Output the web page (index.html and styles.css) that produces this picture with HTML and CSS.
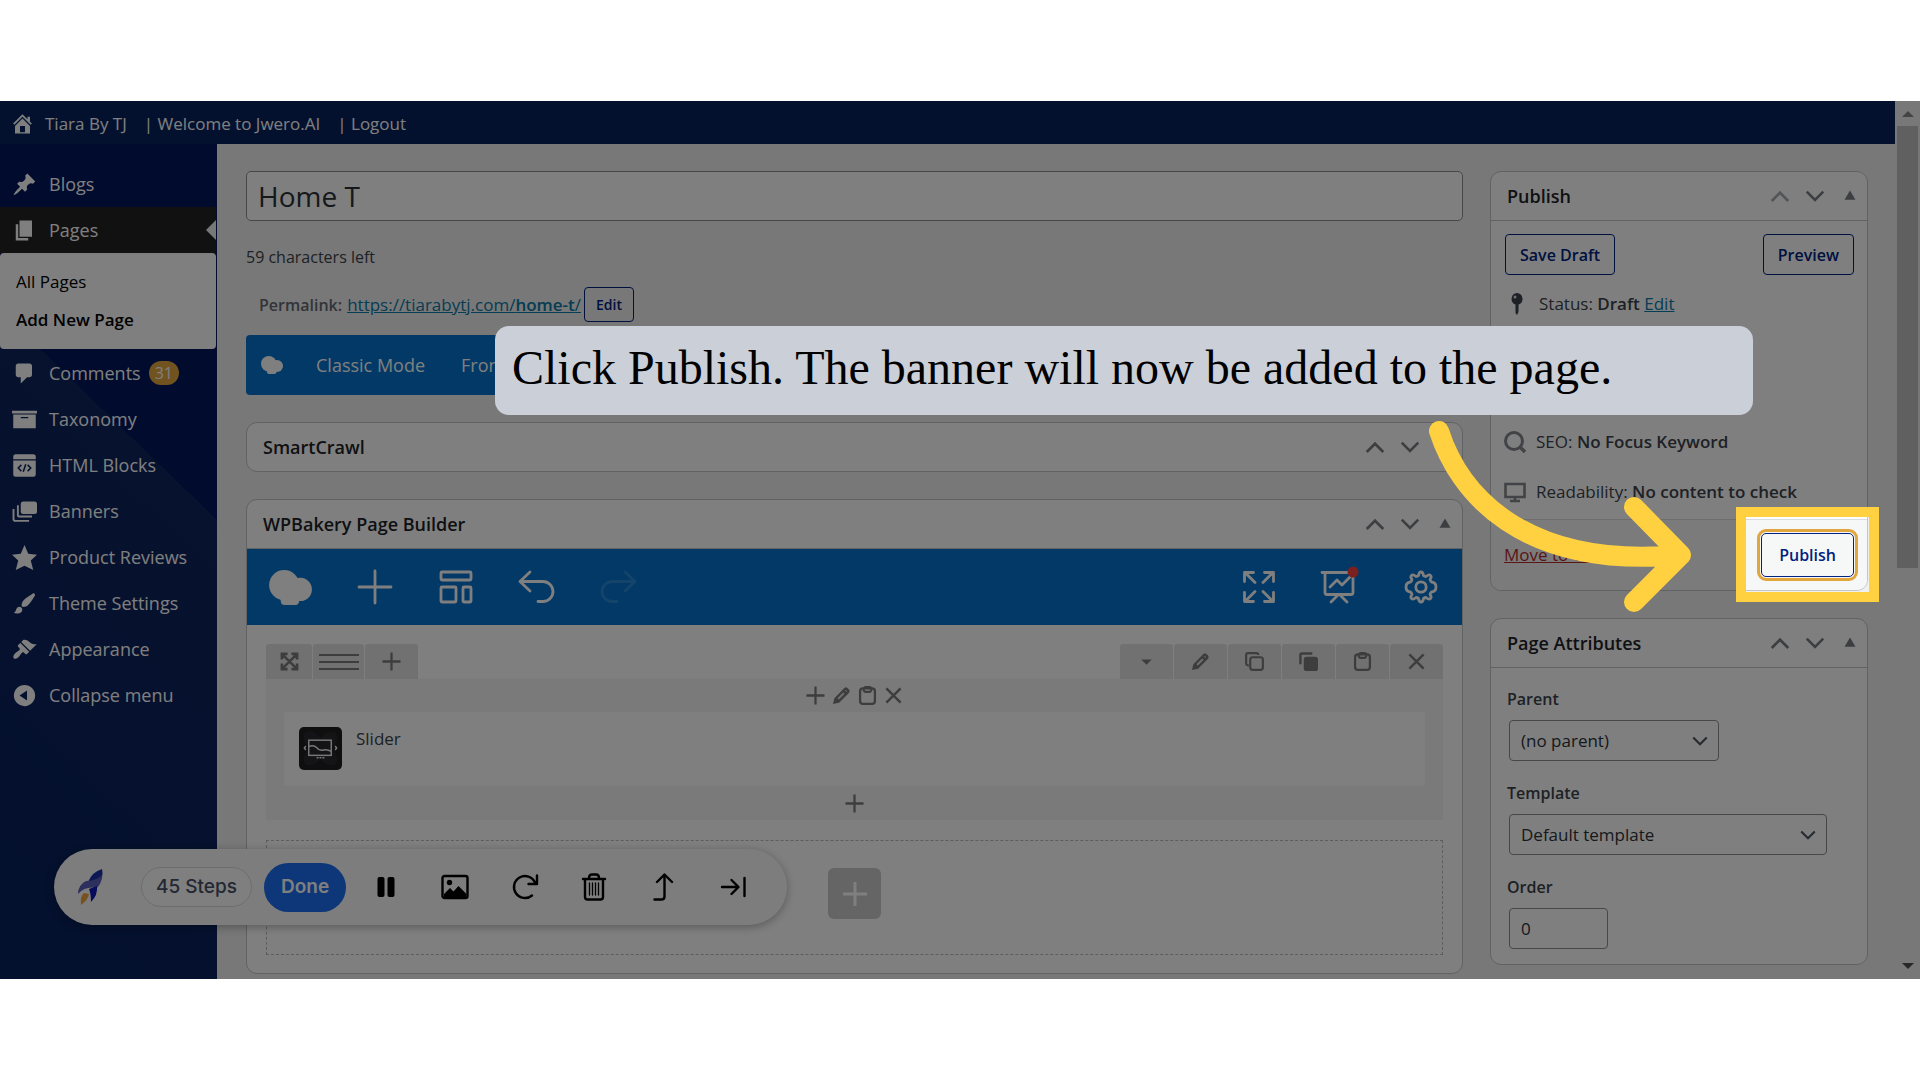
FILE: index.html
```html
<!DOCTYPE html>
<html lang="en">
<head>
<meta charset="utf-8">
<title>Add New Page - Tiara By TJ</title>
<link rel="stylesheet" href="styles.css">
</head>
<body>
<svg class="defs" width="0" height="0" aria-hidden="true">
  <symbol id="chev-up" viewBox="0 0 20 20"><path d="M2.500 14.500l7.500-7.500 7.500 7.500" fill="none" stroke="currentColor" stroke-width="2.4"/></symbol>
  <symbol id="chev-down" viewBox="0 0 20 20"><path d="M2.500 6l7.500 7.500L17.500 6" fill="none" stroke="currentColor" stroke-width="2.4"/></symbol>
  <symbol id="tri-up" viewBox="0 0 20 20"><path d="M10 5l5 8.500H5z" fill="currentColor"/></symbol>
  <symbol id="plus" viewBox="0 0 20 20"><path d="M10 .5v19M.5 10h19" fill="none" stroke="currentColor" stroke-width="2.4"/></symbol>
  <symbol id="close" viewBox="0 0 20 20"><path d="M2.500 2.500l15 15M17.500 2.500l-15 15" fill="none" stroke="currentColor" stroke-width="2.6"/></symbol>
  <symbol id="pencil" viewBox="0 0 20 20"><path d="M1 19l1.500-6L13 2q1.700-1.500 3.500.3l1.200 1.200q1.800 1.800.3 3.500L7.500 17.500z" fill="currentColor"/><path d="M6.500 13.500l6-6M14.500 5.500l.6-.6" stroke="#e3e3e3" stroke-width="2"/></symbol>
  <symbol id="clip" viewBox="0 0 20 20"><rect x="2.200" y="2.500" width="15.600" height="16.300" rx="3" fill="none" stroke="currentColor" stroke-width="2.400"/><rect x="6" y="1.200" width="8" height="5" rx="2.200" fill="none" stroke="currentColor" stroke-width="2.200"/></symbol>
  <symbol id="copy" viewBox="0 0 20 20"><path d="M4 14H3.200q-2 0-2-2V3.200q0-2 2-2H12q2 0 2 2" fill="none" stroke="currentColor" stroke-width="2.300"/><rect x="5.500" y="5.500" width="13.300" height="13.300" rx="2.500" fill="none" stroke="currentColor" stroke-width="2.300"/></symbol>
  <symbol id="dup" viewBox="0 0 20 20"><path d="M1.500 13V3q0-1.500 1.500-1.500h11" fill="none" stroke="currentColor" stroke-width="2.600"/><rect x="5" y="5" width="15" height="15" rx="3" fill="currentColor"/></symbol>
  <symbol id="cloud" viewBox="0 0 44 36"><circle cx="15.500" cy="15.500" r="15.500" fill="currentColor"/><circle cx="32" cy="20" r="12" fill="currentColor"/><path d="M11 26h24q-3 3-4 6-.5 4-4 4H16q-4 0-4-4z" fill="currentColor"/></symbol>
</svg>

<div class="screen">
  <div class="app">
    <header class="adminbar">
      <a href="#" class="site"><svg class="ico" viewBox="0 0 20 20"><path d="M16 8.500l1.530 1.530-1.060 1.060L10 4.600l-6.470 6.490-1.060-1.060L10 2.500l4 4v-2h2v4zm-6-2.460l6 5.990V18H4v-5.970zM12 17v-5H8v5h4z"/></svg>Tiara By TJ</a>
      <a href="#">| Welcome to Jwero.AI</a>
      <a href="#">| Logout</a>
    </header>

    <div class="body">
      <nav class="sidebar">
        <a href="#" class="item"><svg class="ico" viewBox="0 0 20 20"><path d="M10.440 3.020l1.820-1.820 6.360 6.350-1.830 1.820c-1.050-.68-2.480-.57-3.410.36l-.75.75c-.92.93-1.040 2.350-.35 3.410l-1.830 1.820-2.410-2.410-2.800 2.790c-.42.42-3.380 2.710-3.800 2.290s1.860-3.390 2.280-3.810l2.790-2.790L4.100 9.360l1.830-1.820c1.050.69 2.480.57 3.400-.36l.75-.75c.93-.92 1.050-2.350.36-3.410z"/></svg>Blogs</a>
        <a href="#" class="item current"><svg class="ico" viewBox="0 0 20 20"><path d="M6 15V2h10v13H6zm-1 1h8v2H3V5h2v11z"/></svg>Pages</a>
        <div class="submenu">
          <a href="#">All Pages</a>
          <a href="#" class="on">Add New Page</a>
        </div>
        <a href="#" class="item"><svg class="ico" viewBox="0 0 20 20"><path d="M5 2h9c1.100 0 2 .9 2 2v7c0 1.100-.9 2-2 2h-2l-5 5v-5H5c-1.100 0-2-.9-2-2V4c0-1.100.9-2 2-2z"/></svg>Comments<span class="count">31</span></a>
        <a href="#" class="item"><svg class="ico" viewBox="0 0 20 20"><path d="M20 3v2.200H0V3zM1 6h18v11H1V6zm12 3V8H7v1h6z"/></svg>Taxonomy</a>
        <a href="#" class="item"><svg class="ico" viewBox="0 0 20 20"><path fill-rule="evenodd" d="M3 1h14q2 0 2 2v2H1V3q0-2 2-2zM1 6h18v11q0 2-2 2H3q-2 0-2-2z"/><path d="M7.500 9.500L5 12l2.500 2.500M12.500 9.500L15 12l-2.500 2.500M11 9l-2 6" fill="none" stroke="#0b2156" stroke-width="1.200"/></svg>HTML Blocks</a>
        <a href="#" class="item"><svg class="ico" viewBox="0 0 20 20"><rect x="7" y="2" width="13" height="10" rx="2"/><path d="M4.700 5v8q0 1 1 1H16M1.200 8v8q0 1.500 1.500 1.500h11" fill="none" stroke="#fff" stroke-width="1.500"/></svg>Banners</a>
        <a href="#" class="item"><svg class="ico" viewBox="0 0 20 20"><path d="M10 0l3 7 7 .75-5 4.620L17 20l-7-3.500L3 20l2-7.630L0 7.750 7 7z"/></svg>Product Reviews</a>
        <a href="#" class="item"><svg class="ico" viewBox="0 0 20 20"><path d="M18.330 3.570s.27-.8-.31-1.360c-.53-.52-1.220-.24-1.220-.24-.61.3-5.760 3.470-7.670 5.570-.86.96-2.060 3.790-1.090 4.820.92.98 3.960-.17 4.790-1 2.060-2.060 5.210-7.170 5.500-7.790zM1.400 17.650c2.370-1.560 1.460-3.410 3.230-4.640.93-.65 2.220-.62 3.080.29.63.67.8 2.570-.16 3.460-1.570 1.450-4 1.550-6.150.89z"/></svg>Theme Settings</a>
        <a href="#" class="item"><svg class="ico" viewBox="0 0 20 20"><path d="M14.480 11.060L7.410 3.990l1.500-1.500c.5-.56 2.300-.47 3.510.32 1.210.8 1.430 1.280 2.910 2.100 1.180.64 2.450 1.260 4.450.85zm-.71.71L6.700 4.700 4.930 6.470c-.39.39-.39 1.020 0 1.410l1.060 1.060c.39.39.39 1.030 0 1.420-.6.6-1.430 1.110-2.210 1.690-.35.26-.7.53-1.010.84C1.430 14.230.4 16.080 1.400 17.070c.99 1 2.840-.03 4.180-1.360.31-.31.58-.66.85-1.020.57-.78 1.080-1.610 1.690-2.210.39-.39 1.020-.39 1.410 0l1.060 1.060c.39.39 1.020.39 1.410 0z"/></svg>Appearance</a>
        <a href="#" class="item"><svg class="ico" viewBox="0 0 20 20"><path fill-rule="evenodd" d="M10 1.500a8.500 8.500 0 1 1 0 17 8.500 8.500 0 0 1 0-17zM12 6v8l-6-4z"/></svg>Collapse menu</a>
      </nav>

      <main class="content">
        <div class="editor">
          <input class="title" type="text" value="Home T" aria-label="Title">
          <p class="chars">59 characters left</p>
          <div class="permalink"><strong>Permalink:</strong><a href="#">https://tiarabytj.com/<b>home-t</b>/</a><button class="btn small" type="button">Edit</button></div>
          <div class="modes"><svg class="modecloud"><use href="#cloud"/></svg><a href="#">Classic Mode</a><a href="#">Frontend Editor</a></div>

          <section class="panel crawl">
            <div class="head"><h2>SmartCrawl</h2><svg><use href="#chev-up"/></svg><svg><use href="#chev-down"/></svg><svg><use href="#tri-up"/></svg></div>
          </section>

          <section class="panel">
            <div class="head"><h2>WPBakery Page Builder</h2><svg><use href="#chev-up"/></svg><svg><use href="#chev-down"/></svg><svg><use href="#tri-up"/></svg></div>
            <div class="vcbar">
              <button type="button" class="brand" aria-label="WPBakery"><svg class="big"><use href="#cloud"/></svg></button>
              <button type="button" aria-label="Add element"><svg viewBox="0 0 32 32"><path d="M16 0v32M0 16h32"/></svg></button>
              <button type="button" aria-label="Templates"><svg viewBox="0 0 32 32"><rect x="1" y="1" width="30" height="8" rx="1"/><rect x="1" y="16" width="15" height="15" rx="1"/><rect x="23" y="16" width="8" height="15" rx="1"/></svg></button>
              <button type="button" aria-label="Undo"><svg class="wide" viewBox="0 0 36 32"><path d="M11 1L1 10.500 11 20M1 10.500h23a10 10 0 0 1 0 20h-5"/></svg></button>
              <button type="button" aria-label="Redo" class="off"><svg class="wide" viewBox="0 0 36 32"><path d="M25 1l10 9.500L25 20M35 10.500H12a10 10 0 0 0 0 20h5"/></svg></button>
              <span class="spacer"></span>
              <button type="button" aria-label="Full screen"><svg viewBox="0 0 32 32"><path d="M12 11.500L2 1.500M1.500 10.500v-9h9M20 11.500l10-10M21.500 1.500h9v9M12 20.500l-10 10M1.500 21.500v9h9M20 20.500l10 10M30.500 21.500v9h-9"/></svg></button>
              <button type="button" aria-label="SEO"><svg class="wide" viewBox="0 0 36 32"><path d="M0 1.500h32M3 1.500v20q0 2 2 2h24q2 0 2-2v-20M16 24l-7 7M18 24l7 7M8 16l7-7 5 5 8-8"/><circle cx="31" cy="1" r="5.500" fill="#f63e3e" stroke="none"/></svg></button>
              <button type="button" aria-label="Settings"><svg viewBox="0 0 32 32"><circle cx="16" cy="16" r="5.200"/><path d="M13.500 4.500q.500-3.500 2.500-3.500t2.500 3.500q1 1 2.500 1 3-2.500 4.500-1t-.5 4q.5 2 1.500 2.500 4.500.5 4.500 5t-4.500 5q-1 .5-1.500 2.500 2 2.500.5 4t-4.500-1q-1.500 0-2.500 1-.500 3.500-2.500 3.500t-2.500-3.500q-1-1-2.500-1-3 2.500-4.500 1t.5-4q-.500-2-1.500-2.500-4.500-.5-4.500-5t4.500-5q1-.500 1.500-2.500-2-2.500-.5-4t4.500 1q1.500 0 2.500-1z"/></svg></button>
            </div>
            <div class="canvas">
              <div class="tabs">
                <button type="button" class="t-move" aria-label="Move row"><svg viewBox="0 0 20 20"><path d="M3 3l14 14M17 3L3 17M2 8V2h6M12 2h6v6M18 12v6h-6M8 18H2v-6" fill="none" stroke="currentColor" stroke-width="2.800"/></svg></button>
                <button type="button" class="t-lay" aria-label="Row layout"><svg class="lines" viewBox="0 0 40 18"><path d="M0 2h40M0 9h40M0 16h40" fill="none" stroke="currentColor" stroke-width="2"/></svg></button>
                <button type="button" class="t-btn" aria-label="Add column"><svg><use href="#plus"/></svg></button>
                <span class="spacer"></span>
                <button type="button" class="t-btn" aria-label="Toggle row"><svg viewBox="0 0 20 20"><path d="M4.500 8h11l-5.500 5.500z" fill="currentColor"/></svg></button>
                <button type="button" class="t-btn" aria-label="Edit row"><svg><use href="#pencil"/></svg></button>
                <button type="button" class="t-btn" aria-label="Copy row"><svg><use href="#copy"/></svg></button>
                <button type="button" class="t-btn" aria-label="Clone row"><svg><use href="#dup"/></svg></button>
                <button type="button" class="t-btn" aria-label="Paste"><svg><use href="#clip"/></svg></button>
                <button type="button" class="t-btn" aria-label="Delete row"><svg><use href="#close"/></svg></button>
              </div>
              <div class="row">
                <div class="colctl"><svg><use href="#plus"/></svg><svg><use href="#pencil"/></svg><svg><use href="#clip"/></svg><svg><use href="#close"/></svg></div>
                <div class="element">
                  <svg class="thumb" viewBox="0 0 44 44"><rect width="44" height="44" rx="5" fill="#1e1e20"/><path d="M6 6q10-4 16 6 6-10 16-6 4 10-6 16 10 6 6 16-10 4-16-6-6 10-16 6-4-10 6-16Q2 16 6 6z" fill="#29292c"/><rect x="10" y="13.500" width="23" height="15.500" fill="none" stroke="#eee" stroke-width="1.500"/><path d="M10 20q5-2 8 1 3 4 7 2.500 4-1 8 1.500M7 19.500l-1.500 2L7 23.500M37 19.500l1.500 2-1.500 2M18 31.500h2M21 31.500h2M24 31.500h2" fill="none" stroke="#eee" stroke-width="1.500"/></svg>
                  <span>Slider</span>
                </div>
                <div class="colctl last"><svg><use href="#plus"/></svg></div>
              </div>
              <div class="newrow"><button type="button" class="addnew" aria-label="Add row"><svg viewBox="0 0 24 24"><path d="M12 0v24M0 12h24" stroke="#fff" stroke-width="3"/></svg></button></div>
            </div>
          </section>
        </div>

        <aside class="side">
          <section class="panel publish">
            <div class="head"><h2>Publish</h2><svg class="faint"><use href="#chev-up"/></svg><svg><use href="#chev-down"/></svg><svg><use href="#tri-up"/></svg></div>
            <div class="actions"><button class="btn" type="button">Save Draft</button><button class="btn" type="button">Preview</button></div>
            <div class="line"><svg class="pin" viewBox="0 0 12 22"><path d="M6 0a6 6 0 0 1 1.600 11.600L7.500 19 6 22 4.500 20V11.600A6 6 0 0 1 6 0z" fill="#3c434a"/><circle cx="4" cy="4" r="1.500" fill="#ddd"/></svg><span>Status: <b>Draft</b> <a href="#">Edit</a></span></div>
            <div class="line seo"><svg viewBox="0 0 22 22"><circle cx="10" cy="10" r="8.500" fill="none" stroke="#82878c" stroke-width="3"/><path d="M15.500 15.500l5.500 5.500" stroke="#82878c" stroke-width="3.500"/></svg><span>SEO: <b>No Focus Keyword</b></span></div>
            <div class="line"><svg viewBox="0 0 22 22"><path d="M1.500 3h19v13h-19zM6 20h10M11 16v4" fill="none" stroke="#82878c" stroke-width="2.600"/></svg><span>Readability: <b>No content to check</b></span></div>
            <div class="foot"><a href="#" class="trash">Move to Trash</a><button class="btn primary" type="button">Publish</button><div class="spotlight"></div></div>
          </section>

          <section class="panel attrs">
            <div class="head"><h2>Page Attributes</h2><svg><use href="#chev-up"/></svg><svg><use href="#chev-down"/></svg><svg><use href="#tri-up"/></svg></div>
            <form class="fields">
              <label for="parent">Parent</label>
              <div class="select short"><select id="parent"><option>(no parent)</option></select><svg><use href="#chev-down"/></svg></div>
              <label for="template">Template</label>
              <div class="select"><select id="template"><option>Default template</option></select><svg><use href="#chev-down"/></svg></div>
              <label for="order">Order</label>
              <input id="order" type="text" value="0">
            </form>
          </section>
        </aside>
      </main>
    </div>
  </div>

  <div class="scroll" aria-hidden="true"><i class="up"></i><div class="thumbbar"></div><i class="down"></i></div>

  <div class="recorder">
    <svg class="rocket" viewBox="0 0 26 36"><path d="M25 0q2 10-5 17l-9-4Q15 3 25 0z" fill="#1b2fa8"/><path d="M25 6q0 8-5 13Q8 17 1 25q0-9 8-13 10 0 16-6z" fill="#5a60b8"/><path d="M20 17q1 9-6 16 0-8-2-13z" fill="#0d18b4"/><path d="M12 25q-1 6-8 11-1-9 3-12z" fill="#f0a43c"/></svg>
    <span class="steps">45 Steps</span>
    <button class="done" type="button">Done</button>
    <button class="tool" type="button" aria-label="Pause"><svg viewBox="0 0 28 28"><rect x="5.500" y="4" width="7" height="20" rx="2" fill="#000" stroke="none"/><rect x="15.500" y="4" width="7" height="20" rx="2" fill="#000" stroke="none"/></svg></button>
    <button class="tool" type="button" aria-label="Screenshot"><svg viewBox="0 0 28 28"><rect x="1.500" y="3" width="25" height="22" rx="2"/><circle cx="8.500" cy="9.500" r="2.700" fill="#000" stroke="none"/><path d="M3 24v-3l6-6 3.500 3.500L17.500 13l8 8v3z" fill="#000" stroke="none"/></svg></button>
    <button class="tool" type="button" aria-label="Restart"><svg viewBox="0 0 28 28"><path d="M21 22.500A11 11 0 1 1 24 9.500M26 2.500V11h-8.500"/></svg></button>
    <button class="tool" type="button" aria-label="Delete"><svg viewBox="0 0 28 28"><path d="M3 6h22M5 6v18q0 2.500 2.500 2.500h13Q23 26.500 23 24V6M9 5q0-3.500 3-3.500h4q3 0 3 3.500"/><path d="M9.500 10v12M12.500 10v12M15.500 10v12M18.500 10v12" stroke-width="1.300"/></svg></button>
    <button class="tool" type="button" aria-label="Move up"><svg viewBox="0 0 28 28"><path d="M4.500 26.500h7q3 0 3-3V2M7 9l7.500-7.500L22 9"/></svg></button>
    <button class="tool" type="button" aria-label="Skip"><svg viewBox="0 0 28 28"><path d="M3 14h16M12.500 7l7 7-7 7M25.500 5v18"/></svg></button>
  </div>

  <div class="callout">Click Publish. The banner will now be added to the page.</div>
  <svg class="arrow" viewBox="0 0 270 200"><path d="M14 15C33 74 94 154 256 139M209 91l47 48-47 47" fill="none" stroke="#ffd040" stroke-width="20" stroke-linecap="round" stroke-linejoin="round"/></svg>
</div>
</body>
</html>
```
FILE: styles.css
```css
* { box-sizing: border-box; }

body {
  margin: 0;
  padding: 101px 0;
  background: #fff;
  color: #3c434a;
  font: 17px/24px "Open Sans", "Noto Sans", sans-serif;
}

.defs { position: absolute; }
button, input, select { font: inherit; color: inherit; margin: 0; }
button { cursor: pointer; }
h2, p { margin: 0; }
svg { flex: none; display: block; }
b, strong { font-weight: 600; }
a { color: #0a7aa8; }
.spacer { flex: 1; }

.screen {
  position: relative;
  display: flex;
  overflow: hidden;
  background: #f0f0f1;
}
.app { flex: 1; min-width: 0; display: flex; flex-direction: column; }

/* admin bar */
.adminbar {
  display: flex;
  align-items: center;
  gap: 17px;
  height: 43px;
  padding: 2px 0 0 10px;
  background: #06225e;
}
.adminbar a { display: flex; align-items: center; gap: 10px; color: #fff; text-decoration: none; }
.ico { width: 25px; height: 25px; fill: #fff; }

/* sidebar */
.body { flex: 1; display: flex; }
.sidebar {
  width: 217px;
  padding-top: 17px;
  background: linear-gradient(44deg, #06205c 0%, #0e245c 64%, #00165a 64%, #00165a 100%);
}
.item {
  position: relative;
  display: flex;
  align-items: center;
  gap: 12px;
  height: 46px;
  padding-left: 12px;
  color: #fff;
  font-size: 18px;
  text-decoration: none;
}
.item.current { background: #222; width: 216px; }
.item.current::after {
  content: "";
  position: absolute;
  right: 0;
  border: 10px solid transparent;
  border-left: 0;
  border-right-color: #f0f0f1;
}
.submenu {
  display: flex;
  flex-direction: column;
  width: 216px;
  margin-bottom: 1px;
  padding: 10px 0 10px 16px;
  border-radius: 4px;
  background: #fff;
}
.submenu a { line-height: 38px; color: #000; text-decoration: none; }
.submenu .on { font-weight: 600; }
.count {
  margin-left: -4px;
  padding: 0 6px;
  border-radius: 12px;
  background: #e2a63f;
  font-size: 16px;
}

/* content */
.content {
  flex: 1;
  min-width: 0;
  display: grid;
  grid-template-columns: minmax(0, 1fr) 378px;
  gap: 27px;
  align-items: start;
  padding: 27px 27px 5px 29px;
}
.title {
  display: block;
  width: 100%;
  height: 50px;
  padding: 0 11px;
  border: 1px solid #8c8f94;
  border-radius: 5px;
  background: #fff;
  color: #2c3338;
  font-size: 28px;
}
.chars { margin-top: 24px; font-size: 16px; }
.permalink { display: flex; align-items: center; margin: 18px 0 13px 13px; }
.permalink strong { margin-right: 5px; font-size: 16px; color: #646970; }
.permalink .btn { margin-left: 3px; }

.btn {
  height: 41px;
  padding: 0 14px;
  border: 1px solid #00237f;
  border-radius: 4px;
  background: transparent;
  color: #00237f;
  font-size: 16px;
  font-weight: 600;
}
.btn.small { height: 35px; padding: 0 11px; font-size: 14px; }

.modes {
  display: flex;
  align-items: center;
  width: max-content;
  height: 60px;
  padding: 0 15px;
  gap: 36px;
  border-radius: 4px;
  background: #0473ce;
  font-size: 18px;
}
.modes a { color: #fff; text-decoration: none; }
.modecloud { width: 22px; height: 18px; margin-right: -3px; color: #fff; }

.panel {
  border: 1px solid #c3c4c7;
  border-radius: 11px;
  background: #fff;
}
.crawl { margin: 27px 0; }
.head { display: flex; align-items: center; height: 48px; padding: 0 6px 0 16px; gap: 13px; }
.head h2 { flex: 1; font-size: 18px; line-height: 24px; font-weight: 600; color: #1d2327; }
.head svg { width: 22px; height: 22px; color: #787c82; }
.head svg.faint { color: #a7aaad; }

.vcbar {
  display: flex;
  align-items: center;
  height: 77px;
  padding-right: 1px;
  border-top: 1px solid #c3c4c7;
  background: #0473ce;
}
.vcbar button {
  display: grid;
  place-items: center;
  width: 81px;
  height: 76px;
  padding: 0;
  border: 0;
  background: none;
  color: #fff;
}
.vcbar .brand { width: 87px; }
.vcbar svg { width: 32px; height: 32px; overflow: visible; fill: none; stroke: currentColor; stroke-width: 2.8; stroke-linecap: round; stroke-linejoin: round; }
.vcbar svg.big { width: 43px; height: 35px; stroke: none; }
.vcbar svg.wide { width: 36px; }
.vcbar .off { opacity: .15; }

.canvas { padding: 19px 19px 18px; }
.tabs { display: flex; gap: 1px; color: #7b7b7b; }
.tabs button {
  display: grid;
  place-items: center;
  height: 35px;
  padding: 0;
  border: 0;
  border-radius: 3px 3px 0 0;
  background: #e3e3e3;
  color: inherit;
}
.tabs .t-move { width: 46px; }
.tabs .t-lay { width: 51px; }
.tabs .t-btn { width: 53px; }
.tabs svg { width: 19px; height: 19px; }
.tabs .lines { width: 40px; height: 18px; }

.row { padding: 0 18px; background: #f5f5f5; }
.colctl { display: flex; justify-content: center; align-items: center; gap: 7px; height: 33px; color: #7b7b7b; }
.colctl.last { height: 34px; }
.colctl svg { width: 19px; height: 19px; }
.element {
  display: flex;
  gap: 14px;
  height: 74px;
  padding: 15px;
  border-radius: 3px;
  background: #fff;
}
.thumb { width: 43px; height: 43px; }
.newrow {
  display: grid;
  place-items: center;
  height: 115px;
  margin-top: 20px;
  border: 1px dashed #bbb;
}
.addnew {
  display: grid;
  place-items: center;
  width: 53px;
  height: 51px;
  margin-top: -8px;
  padding: 0;
  border: 0;
  border-radius: 6px;
  background: #cacaca;
}
.addnew svg { width: 24px; height: 24px; }

/* right column */
.side .head { border-bottom: 1px solid #c3c4c7; height: 49px; }
.actions { display: flex; justify-content: space-between; padding: 13px 13px 17px 14px; }
.line { display: flex; align-items: center; gap: 10px; height: 24px; margin: 0 13px 26px; }
.line svg { width: 22px; height: 22px; }
.line .pin { width: 12px; margin: 0 6px 0 7px; }
.line.seo { margin-top: 114px; }
.line:has(+ .foot) { margin-bottom: 15px; }
.foot {
  position: relative;
  display: flex;
  align-items: center;
  justify-content: space-between;
  height: 71px;
  padding: 0 13px;
  border-top: 1px solid #dcdcde;
  border-radius: 0 0 11px 11px;
  background: #f6f7f7;
}
.trash { color: #b32d2e; }
.btn.primary {
  height: 44px;
  padding: 0 17px;
  outline: 3px solid #e2a63f;
  outline-offset: 1px;
  border-radius: 5px;
}
/* dims everything except the highlighted button */
.spotlight {
  position: absolute;
  z-index: 5;
  top: -13px;
  right: -12px;
  width: 143px;
  height: 95px;
  border: 10px solid #ffd040;
  box-shadow: 0 0 0 4000px rgba(0, 0, 0, .5);
  pointer-events: none;
}

.attrs { margin-top: 27px; }
.fields { display: flex; flex-direction: column; align-items: flex-start; padding: 19px 16px 15px; }
.fields label { font-size: 16px; font-weight: 600; margin-bottom: 9px; }
.select { position: relative; width: 318px; margin: 0 2px 20px; }
.select.short { width: 210px; }
.select select, .fields input {
  display: block;
  width: 100%;
  height: 41px;
  padding: 0 11px;
  border: 1px solid #8c8f94;
  border-radius: 4px;
  background: #fff;
  color: #2c3338;
  appearance: none;
}
.select svg { position: absolute; right: 10px; top: 12px; width: 18px; height: 18px; pointer-events: none; color: #50575e; }
.fields input { width: 99px; margin: 0 2px; }

/* browser scrollbar */
.scroll {
  display: flex;
  flex-direction: column;
  align-items: center;
  width: 25px;
  background: #f1f1f1;
}
.scroll i { border: 6px solid transparent; }
.scroll .up { border-top: 0; border-bottom-color: #888; margin: 10px 0 9px; }
.scroll .down { border-bottom: 0; border-top-color: #505050; margin: auto 0 10px; }
.thumbbar { width: 21px; height: 442px; background: #c1c1c1; }

/* recorder toolbar */
.recorder {
  position: absolute;
  z-index: 2;
  left: 54px;
  bottom: 54px;
  display: flex;
  align-items: center;
  width: 733px;
  height: 76px;
  padding: 0 19px 0 23px;
  border-radius: 38px;
  background: #fafafa;
  box-shadow: 0 2px 10px rgba(0, 0, 0, .3);
  font-family: Inter, sans-serif;
}
.rocket { width: 26px; height: 36px; margin-right: 38px; }
.steps {
  padding: 7px 14px;
  border: 1px solid #d8dbe0;
  border-radius: 20px;
  background: #fff;
  color: #475067;
  font-size: 19px;
  font-weight: 500;
  white-space: nowrap;
}
.done {
  height: 49px;
  margin: 0 5px 0 12px;
  padding: 0 17px;
  border: 0;
  border-radius: 25px;
  background: #1a6ef0;
  color: #fff;
  font-size: 19px;
  font-weight: 600;
}
.tool { flex: 1; display: grid; place-items: center; height: 49px; padding: 0; border: 0; background: none; }
.tool svg { width: 28px; height: 28px; fill: none; stroke: #000; stroke-width: 2.4; stroke-linecap: round; stroke-linejoin: round; }

/* annotations */
.callout {
  position: absolute;
  z-index: 6;
  top: 225px;
  left: 495px;
  right: 167px;
  height: 89px;
  padding: 0 17px;
  border-radius: 14px;
  background: #cbcfd8;
  color: #000;
  font: 48px/84px "Liberation Serif", serif;
  white-space: nowrap;
}
.arrow { position: absolute; z-index: 7; top: 315px; right: 225px; width: 270px; height: 200px; }
```
